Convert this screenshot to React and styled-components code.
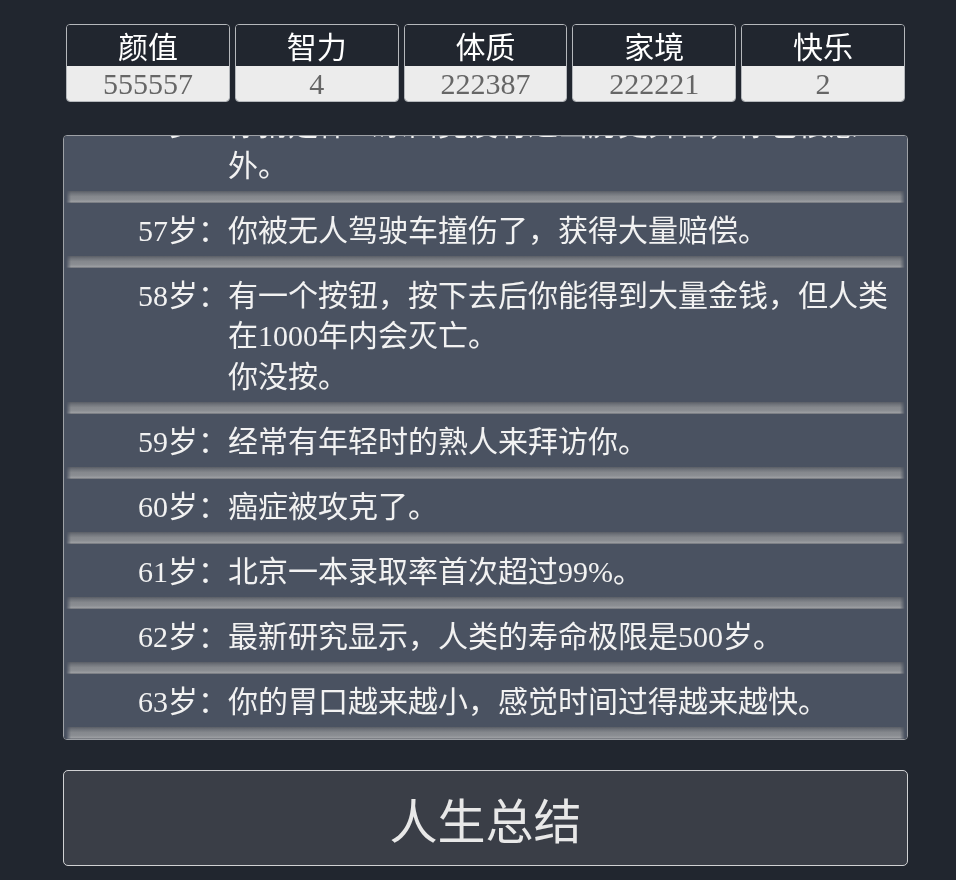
import React, { useLayoutEffect, useRef } from 'react';
import styled, { createGlobalStyle } from 'styled-components';

const GlobalStyle = createGlobalStyle`
  html, body {
    margin: 0;
    padding: 0;
    background: #21262f;
  }
  * {
    box-sizing: border-box;
  }
`;

const Page = styled.div`
  width: 845px;
  margin-left: 63px;
  padding-top: 24px;
`;

const StatRow = styled.div`
  display: grid;
  grid-template-columns: repeat(5, 1fr);
  gap: 5px;
  margin: 0 3px;
`;

const Stat = styled.div`
  border: 1px solid #b5b8bc;
  border-radius: 4px;
  overflow: hidden;
  display: flex;
  flex-direction: column;
`;

const StatName = styled.div`
  height: 41px;
  line-height: 41px;
  background: #21262f;
  color: #ffffff;
  font-family: 'Noto Sans CJK SC', sans-serif;
  font-size: 30px;
  text-align: center;
`;

const StatValue = styled.div`
  height: 35px;
  line-height: 35px;
  background: #ececec;
  color: #666666;
  font-family: 'Liberation Serif', serif;
  font-size: 30px;
  text-align: center;
`;

const Trajectory = styled.ul`
  list-style: none;
  margin: 33px 0 0;
  padding: 0;
  height: 605px;
  border: 1px solid #9ea1a6;
  border-radius: 4px;
  background: #4a5261;
  overflow-y: auto;
  scrollbar-width: none;
  &::-webkit-scrollbar {
    display: none;
  }
`;

const Entry = styled.li`
  display: block;
`;

const Row = styled.div`
  display: flex;
  padding: 8px 10px 4.5px 74px;
  font-family: 'Liberation Serif', 'Noto Sans CJK SC', serif;
  font-size: 30px;
  line-height: 40.5px;
  color: #f2f2f2;
`;

const Age = styled.span`
  flex: none;
  width: 90px;
`;

const Text = styled.span`
  flex: 1;
  white-space: pre-line;
`;

const Divider = styled.div`
  height: 12px;
  margin: 0 2px;
  background: linear-gradient(
    to bottom,
    #5a5e66 0%,
    #6e7279 18%,
    #85888d 45%,
    #8a8d92 70%,
    #9b9da1 88%,
    #6c7077 100%
  );
  -webkit-mask-image: linear-gradient(to right, transparent 0, #000 5px, #000 calc(100% - 5px), transparent 100%);
  mask-image: linear-gradient(to right, transparent 0, #000 5px, #000 calc(100% - 5px), transparent 100%);
`;

const Summary = styled.button`
  display: block;
  width: 100%;
  height: 96px;
  margin-top: 30px;
  border: 1px solid #d0d1d3;
  border-radius: 5px;
  background: #3a3e47;
  color: #e8e8e8;
  font-family: 'Noto Sans CJK SC', sans-serif;
  font-size: 48px;
  cursor: pointer;
`;

const stats = [
  { name: '颜值', value: '555557' },
  { name: '智力', value: '4' },
  { name: '体质', value: '222387' },
  { name: '家境', value: '222221' },
  { name: '快乐', value: '2' },
];

const events = [
  { age: 52, text: '你的身体状况越来越差了。' },
  { age: 53, text: '你开始学习养生。' },
  { age: 54, text: '什么也没发生。' },
  { age: 55, text: '你的孙子出生了。' },
  { age: 56, text: '你猜是什么东西竟没有退出历史舞台，你也很意外。' },
  { age: 57, text: '你被无人驾驶车撞伤了，获得大量赔偿。' },
  { age: 58, text: '有一个按钮，按下去后你能得到大量金钱，但人类在1000年内会灭亡。\n你没按。' },
  { age: 59, text: '经常有年轻时的熟人来拜访你。' },
  { age: 60, text: '癌症被攻克了。' },
  { age: 61, text: '北京一本录取率首次超过99%。' },
  { age: 62, text: '最新研究显示，人类的寿命极限是500岁。' },
  { age: 63, text: '你的胃口越来越小，感觉时间过得越来越快。' },
];

export default function App() {
  const listRef = useRef(null);

  useLayoutEffect(() => {
    const el = listRef.current;
    if (el) el.scrollTop = el.scrollHeight;
  }, []);

  return (
    <Page>
      <GlobalStyle />
      <StatRow>
        {stats.map((s) => (
          <Stat key={s.name}>
            <StatName>{s.name}</StatName>
            <StatValue>{s.value}</StatValue>
          </Stat>
        ))}
      </StatRow>
      <Trajectory ref={listRef}>
        {events.map((e) => (
          <Entry key={e.age}>
            <Row>
              <Age>{e.age}岁：</Age>
              <Text>{e.text}</Text>
            </Row>
            <Divider />
          </Entry>
        ))}
      </Trajectory>
      <Summary>人生总结</Summary>
    </Page>
  );
}
